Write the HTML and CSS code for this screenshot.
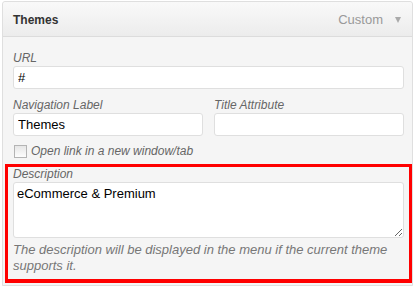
FILE: index.html
```html
<!DOCTYPE html>
<html>
<head>
<meta charset="utf-8">
<link rel="stylesheet" href="styles.css">
</head>
<body>
<div class="panel">
  <div class="panel-head">
    <span class="title">Themes</span>
    <span class="meta">Custom <span class="arrow"></span></span>
  </div>
  <div class="panel-body">
    <div class="field">
      <label class="lbl">URL</label>
      <input class="txt" type="text" value="#">
    </div>
    <div class="row">
      <div class="field half">
        <label class="lbl">Navigation Label</label>
        <input class="txt" type="text" value="Themes">
      </div>
      <div class="field half">
        <label class="lbl">Title Attribute</label>
        <input class="txt" type="text" value="">
      </div>
    </div>
    <div class="check-row">
      <span class="checkbox"></span>
      <span class="lbl">Open link in a new window/tab</span>
    </div>
    <div class="highlight">
      <label class="lbl desc-lbl">Description</label>
      <textarea class="area">eCommerce &amp; Premium</textarea>
      <p class="help">The description will be displayed in the menu if the current theme supports it.</p>
    </div>
  </div>
</div>
</body>
</html>
```
FILE: styles.css
```css
html, body {
  margin: 0;
  padding: 0;
  background: #fff;
}
body {
  font-family: "Liberation Sans", Arial, sans-serif;
  font-size: 13px;
}
.panel {
  margin: 1px 0 0 2px;
  width: 409px;
  border: 1px solid #dfdfdf;
  border-radius: 3px 3px 0 0;
  background: #f5f5f5;
}
.panel-head {
  height: 34px;
  border-bottom: 1px solid #dcdcdc;
  background: linear-gradient(#f9f9f9, #ececec);
  display: flex;
  align-items: center;
  justify-content: space-between;
  padding: 0 11px 0 10px;
  border-radius: 3px 3px 0 0;
}
.title {
  font-weight: bold;
  font-size: 12px;
  color: #333;
  margin-top: 1px;
}
.meta {
  color: #999;
  font-size: 13px;
  display: flex;
  align-items: center;
  margin-top: 1px;
}
.arrow {
  width: 0;
  height: 0;
  border-left: 3.5px solid transparent;
  border-right: 3.5px solid transparent;
  border-top: 6px solid #aaa;
  margin-left: 12px;
  margin-top: 1px;
}
.panel-body {
  padding: 13px 8px 2px 10px;
}
.field {
  display: flex;
  flex-direction: column;
}
.lbl {
  font-style: italic;
  font-size: 12px;
  color: #666;
  line-height: 16px;
}
.txt {
  box-sizing: border-box;
  height: 23px;
  margin: 0;
  border: 1px solid #dfdfdf;
  border-radius: 3px;
  background: #fff;
  padding: 0 4px;
  font-family: "Liberation Sans", Arial, sans-serif;
  font-size: 13px;
  color: #000;
  outline: none;
}
.row {
  display: flex;
  gap: 11px;
  margin-top: 8px;
}
.half {
  flex: 1;
}
.check-row {
  display: flex;
  align-items: center;
  margin-top: 7px;
  height: 16px;
}
.checkbox {
  box-sizing: border-box;
  width: 13px;
  height: 13px;
  border: 1px solid #b4b4b4;
  background: linear-gradient(#e6e6e6, #fdfdfd);
  margin: 0 4px 0 1px;
}
.highlight {
  margin: 5px -8px 0 -8px;
  border: 3px solid #ff0000;
  border-bottom-width: 4px;
  padding: 0 5px 5px 5px;
  display: flex;
  flex-direction: column;
}
.desc-lbl {
  line-height: 15px;
}
.area {
  box-sizing: border-box;
  height: 56px;
  margin: 0;
  border: 1px solid #dfdfdf;
  border-radius: 3px;
  background: #fff;
  padding: 3px 3px;
  font-family: "Liberation Sans", Arial, sans-serif;
  font-size: 13px;
  color: #000;
  outline: none;
  resize: vertical;
}
.help {
  margin: 4px 0 0 0;
  font-style: italic;
  color: #777;
  line-height: 16px;
}
```
